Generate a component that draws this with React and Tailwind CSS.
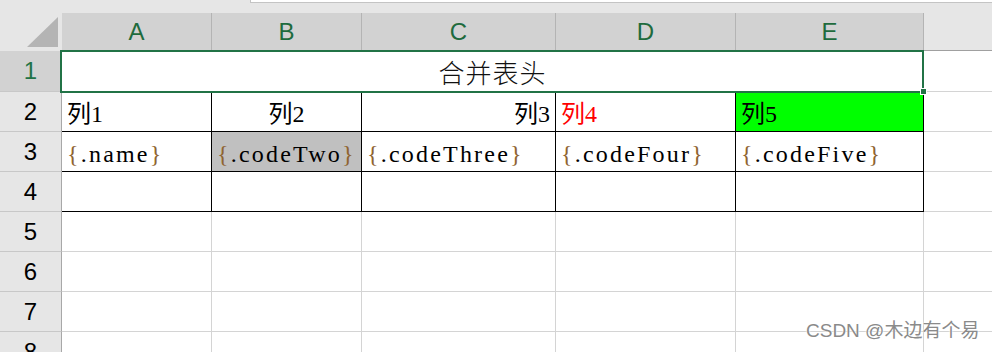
import React from "react";

const COLS = ["A", "B", "C", "D", "E"];
const WIDTHS = ["w-[150px]", "w-[150px]", "w-[194px]", "w-[180px]", "w-[188px]"];
const FONT = { fontFamily: '"Liberation Serif", "Noto Sans CJK SC", serif' };

function Braced({ text }) {
  const inner = text.slice(1, -1);
  return (
    <span className="tracking-[2.2px]">
      <span className="text-[#8f6430]">{"{"}</span>
      {inner}
      <span className="text-[#8f6430]">{"}"}</span>
    </span>
  );
}

function RowHeader({ n, selected }) {
  return (
    <div
      className={
        "w-[62px] shrink-0 flex items-center justify-center border-r border-b border-r-[#a8a8a8] border-b-[#c8c8c8] text-[24px] " +
        (selected ? "bg-[#d2d2d2] text-[#217346]" : "bg-[#e6e6e6] text-black")
      }
      style={{ fontFamily: '"Liberation Sans", Arial, sans-serif' }}
    >
      <span className="leading-none">{n}</span>
    </div>
  );
}

function DataRow({ n, cells }) {
  return (
    <div className="flex h-[40px]">
      <RowHeader n={n} />
      {cells.map((c, i) => (
        <div
          key={i}
          className={
            WIDTHS[i] +
            " shrink-0 border-r border-b border-black flex items-end pb-[5px] px-[5px] text-[24px] leading-none whitespace-nowrap " +
            (c.align === "center" ? "justify-center " : c.align === "right" ? "justify-end " : "justify-start ") +
            (c.bg || "bg-white ") +
            (c.color || "text-black")
          }
          style={FONT}
        >
          {c.t && c.t.startsWith("{") ? <Braced text={c.t} /> : c.t}
        </div>
      ))}
      <div className="flex-1 border-b border-[#d4d4d4] bg-white" />
    </div>
  );
}

function EmptyRow({ n }) {
  return (
    <div className="flex h-[40px]">
      <RowHeader n={n} />
      {WIDTHS.map((w, i) => (
        <div key={i} className={w + " shrink-0 border-r border-b border-[#d4d4d4] bg-white"} />
      ))}
      <div className="flex-1 border-b border-[#d4d4d4] bg-white" />
    </div>
  );
}

export default function App() {
  const row2 = [
    { t: "列1" },
    { t: "列2", align: "center" },
    { t: "列3", align: "right" },
    { t: "列4", color: "text-[#ff0000]" },
    { t: "列5", bg: "bg-[#00ff00] " },
  ];
  const row3 = [
    { t: "{.name}" },
    { t: "{.codeTwo}", bg: "bg-[#c0c0c0] " },
    { t: "{.codeThree}" },
    { t: "{.codeFour}" },
    { t: "{.codeFive}" },
  ];
  const row4 = [{}, {}, {}, {}, {}];

  return (
    <div className="relative w-[992px] h-[352px] overflow-hidden bg-white">
      {/* top strip */}
      <div className="flex h-[13px] bg-[#e6e6e6]">
        <div className="w-[250px] shrink-0" />
        <div className="flex-1 h-[3px] bg-white border-l border-b border-[#c4c4c4]" />
      </div>

      {/* column header */}
      <div className="flex h-[38px]" style={{ fontFamily: '"Liberation Sans", Arial, sans-serif' }}>
        <div className="w-[61px] shrink-0 bg-[#e6e6e6] relative">
          <svg width="61" height="38" className="block">
            <polygon points="58,4 58,34 27,34" fill="#b4b4b4" />
          </svg>
        </div>
        <div className="w-[1px] shrink-0 bg-[#e6e6e6]" />
        {COLS.map((c, i) => (
          <div
            key={c}
            className={
              WIDTHS[i] +
              " shrink-0 bg-[#d2d2d2] border-r border-[#b4b4b4] flex items-center justify-center text-[24px] text-[#1e6b3d]"
            }
          >
            <span className="leading-none">{c}</span>
          </div>
        ))}
        <div className="flex-1 bg-[#e6e6e6] border-b border-[#a0a0a0]" />
      </div>

      {/* row 1 merged */}
      <div className="flex h-[41px]">
        <RowHeader n={1} selected />
        <div
          className="w-[862px] shrink-0 border-r border-b border-[#d4d4d4] bg-white flex items-end justify-center pb-[6px] text-[26px] leading-none text-[#111] tracking-[1px]"
          style={{ fontFamily: '"Noto Sans CJK SC", sans-serif', fontWeight: 300 }}
        >
          合并表头
        </div>
        <div className="flex-1 border-b border-[#d4d4d4] bg-white" />
      </div>

      <DataRow n={2} cells={row2} />
      <DataRow n={3} cells={row3} />
      <DataRow n={4} cells={row4} />
      <EmptyRow n={5} />
      <EmptyRow n={6} />
      <EmptyRow n={7} />
      <EmptyRow n={8} />

      {/* selection overlay */}
      <div className="absolute left-[60px] top-[50px] w-[864px] h-[43px] border-2 border-[#217346] pointer-events-none" />
      <div className="absolute left-[920px] top-[88px] w-[7px] h-[7px] bg-[#217346] border border-white" />

      {/* watermark */}
      <div
        className="absolute left-[806px] top-[321px] text-[19px] leading-none text-[#8a8a8a] whitespace-nowrap"
        style={{
          fontFamily: '"Liberation Sans", "Noto Sans CJK SC", sans-serif',
          textShadow: "0 0 2px #fff, 0 0 2px #fff",
        }}
      >
        CSDN @木边有个易
      </div>
    </div>
  );
}
